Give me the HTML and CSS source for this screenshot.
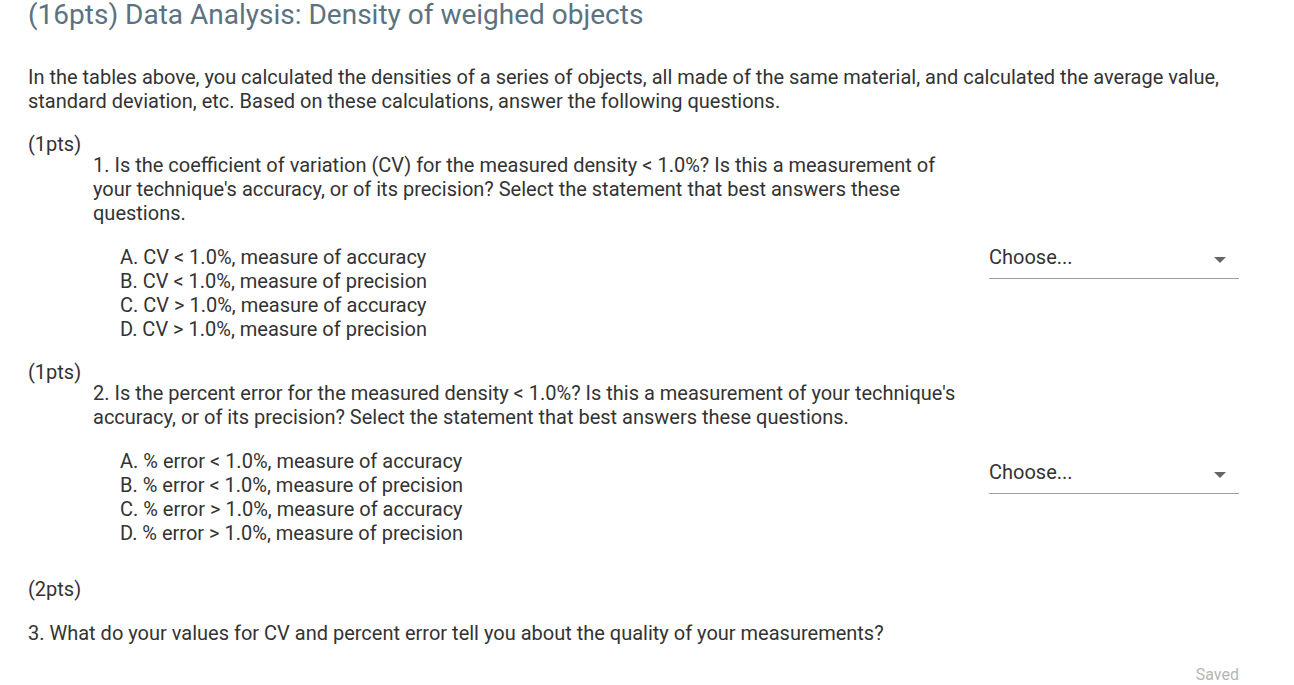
FILE: index.html
```html
<!DOCTYPE html>
<html>
<head>
<meta charset="utf-8">
<link rel="stylesheet" href="styles.css">
</head>
<body>
<div class="page">
  <h1 class="title">(16pts) Data Analysis: Density of weighed objects</h1>
  <p class="intro">In the tables above, you calculated the densities of a series of objects, all made of the same material, and calculated the average value, standard deviation, etc. Based on these calculations, answer the following questions.</p>

  <div class="question">
    <div class="pts">(1pts)</div>
    <div class="qtext">1. Is the coefficient of variation (CV) for the measured density &lt; 1.0%? Is this a measurement of your technique's accuracy, or of its precision? Select the statement that best answers these questions.</div>
    <div class="answer-row">
      <ul class="options">
        <li>A. CV &lt; 1.0%, measure of accuracy</li>
        <li>B. CV &lt; 1.0%, measure of precision</li>
        <li>C. CV &gt; 1.0%, measure of accuracy</li>
        <li>D. CV &gt; 1.0%, measure of precision</li>
      </ul>
      <div class="select">
        <span class="select-label">Choose...</span>
        <span class="caret"></span>
      </div>
    </div>
  </div>

  <div class="question">
    <div class="pts">(1pts)</div>
    <div class="qtext">2. Is the percent error for the measured density &lt; 1.0%? Is this a measurement of your technique's accuracy, or of its precision? Select the statement that best answers these questions.</div>
    <div class="answer-row">
      <ul class="options">
        <li>A. % error &lt; 1.0%, measure of accuracy</li>
        <li>B. % error &lt; 1.0%, measure of precision</li>
        <li>C. % error &gt; 1.0%, measure of accuracy</li>
        <li>D. % error &gt; 1.0%, measure of precision</li>
      </ul>
      <div class="select select-low">
        <span class="select-label">Choose...</span>
        <span class="caret"></span>
      </div>
    </div>
  </div>

  <div class="question question-open">
    <div class="pts">(2pts)</div>
    <div class="qtext-open">3. What do your values for CV and percent error tell you about the quality of your measurements?</div>
  </div>

  <div class="status">Saved</div>
</div>
</body>
</html>
```

FILE: styles.css
```css
html, body {
  margin: 0;
  padding: 0;
  background: #ffffff;
}
body {
  font-family: Roboto, "Liberation Sans", Arial, sans-serif;
  color: #333333;
  font-size: 20px;
  line-height: 24px;
}
.page {
  width: 1211px;
  padding: 0 0 0 28px;
}
.title {
  margin: 0;
  font-size: 28px;
  line-height: 30px;
  font-weight: 400;
  color: #5b7380;
}
.intro {
  margin: 35px 0 0 0;
}
.question {
  margin-top: 23px;
}
.pts {
  line-height: 17px;
}
.qtext {
  margin-left: 65px;
  max-width: 870px;
}
.answer-row {
  display: flex;
  justify-content: space-between;
  align-items: flex-start;
  margin-top: 20px;
}
.options {
  list-style: none;
  margin: 0 0 0 92px;
  padding: 0;
}
.select {
  width: 250px;
  height: 43px;
  border-bottom: 1px solid #9e9e9e;
  display: flex;
  justify-content: space-between;
  align-items: center;
  box-sizing: border-box;
  margin-top: -9px;
}
.select-low {
  margin-top: 2px;
}
.select-label {
  color: #333333;
}
.caret {
  width: 0;
  height: 0;
  border-left: 6px solid transparent;
  border-right: 6px solid transparent;
  border-top: 6px solid #666666;
  margin-right: 13px;
  margin-top: 6px;
}
.question-open {
  margin-top: 36px;
}
.qtext-open {
  margin-top: 23px;
}
.status {
  margin-top: 18px;
  text-align: right;
  font-size: 16px;
  color: #b5b5b5;
}
```
